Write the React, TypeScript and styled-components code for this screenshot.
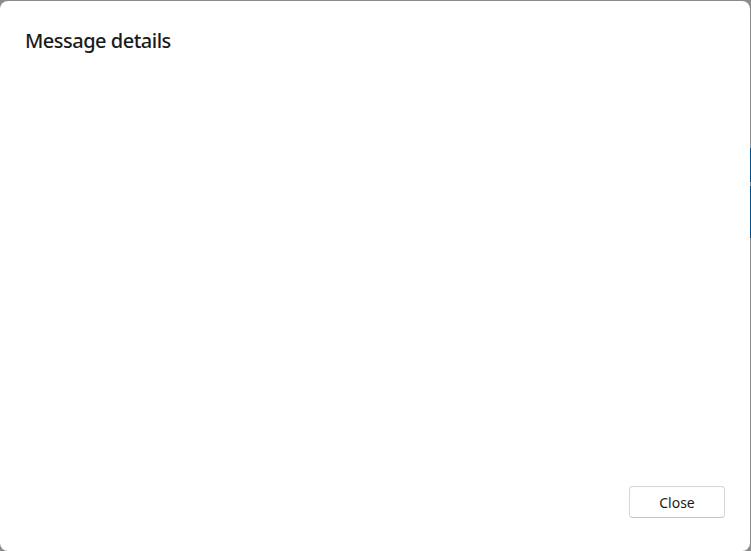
import React from "react"
import styled, { createGlobalStyle } from "styled-components"

const GlobalStyle = createGlobalStyle`
  html, body {
    margin: 0;
    padding: 0;
    width: 751px;
    height: 551px;
    overflow: hidden;
  }
  body {
    background-color: #8b8b8b;
    background-image: linear-gradient(
      to bottom,
      transparent 0 148px,
      #004e8c 148px 182px,
      #8b8b8b 182px 186px,
      #004e8c 186px 238px,
      transparent 238px
    );
    background-repeat: no-repeat;
    background-size: 1px 100%;
    background-position: right top;
    font-family: "Noto Sans", "Open Sans", sans-serif;
  }
`

const Page = styled.div`
  display: flex;
  padding: 1px 1px 0 0;
  height: 551px;
  box-sizing: border-box;
`

const Dialog = styled.div`
  flex: 1;
  display: flex;
  flex-direction: column;
  background: #ffffff;
  border-radius: 8px;
  padding: 24px 25px 33px 25px;
`

const Title = styled.h1`
  margin: 0;
  font-size: 20px;
  line-height: 32px;
  font-weight: 500;
  color: #1b1b1b;
  letter-spacing: -0.5px;
`

const Body = styled.div`
  flex: 1;
`

const Footer = styled.div`
  display: flex;
  justify-content: flex-end;
`

const Button = styled.button`
  width: 96px;
  height: 32px;
  border: 1px solid #d6d6d6;
  border-bottom-color: #c4c4c4;
  border-radius: 4px;
  background: #ffffff;
  color: #1b1b1b;
  font-family: "Noto Sans", "Open Sans", sans-serif;
  font-size: 14px;
  padding: 0;
`

export default function App() {
  return (
    <>
      <GlobalStyle />
      <Page>
        <Dialog>
          <Title>Message details</Title>
          <Body />
          <Footer>
            <Button>Close</Button>
          </Footer>
        </Dialog>
      </Page>
    </>
  )
}
